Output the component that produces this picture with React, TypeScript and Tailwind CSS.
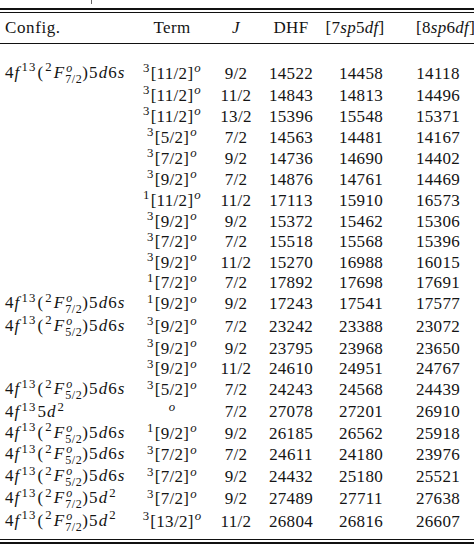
import React from 'react';

// Energy-level table (LaTeX booktabs look). Rows are fixed-height so the
// baselines land where the typeset original puts them.

type Row = {
  c: '' | 'A7' | 'A5' | 'B' | 'C7';
  t: [string, string] | null;
  j: string;
  v: [string, string, string];
  h: number;
};

const rows: Row[] = [
  { c: 'A7', t: ['3', '11/2'], j: '9/2', v: ['14522', '14458', '14118'], h: 23 },
  { c: '', t: ['3', '11/2'], j: '11/2', v: ['14843', '14813', '14496'], h: 21 },
  { c: '', t: ['3', '11/2'], j: '13/2', v: ['15396', '15548', '15371'], h: 21 },
  { c: '', t: ['3', '5/2'], j: '7/2', v: ['14563', '14481', '14167'], h: 21 },
  { c: '', t: ['3', '7/2'], j: '9/2', v: ['14736', '14690', '14402'], h: 21 },
  { c: '', t: ['3', '9/2'], j: '7/2', v: ['14876', '14761', '14469'], h: 21 },
  { c: '', t: ['1', '11/2'], j: '11/2', v: ['17113', '15910', '16573'], h: 21 },
  { c: '', t: ['3', '9/2'], j: '9/2', v: ['15372', '15462', '15306'], h: 21 },
  { c: '', t: ['3', '7/2'], j: '7/2', v: ['15518', '15568', '15396'], h: 20 },
  { c: '', t: ['3', '9/2'], j: '11/2', v: ['15270', '16988', '16015'], h: 21 },
  { c: '', t: ['1', '7/2'], j: '7/2', v: ['17892', '17698', '17691'], h: 20 },
  { c: 'A7', t: ['1', '9/2'], j: '9/2', v: ['17243', '17541', '17577'], h: 22 },
  { c: 'A5', t: ['3', '9/2'], j: '7/2', v: ['23242', '23388', '23072'], h: 23 },
  { c: '', t: ['3', '9/2'], j: '9/2', v: ['23795', '23968', '23650'], h: 21 },
  { c: '', t: ['3', '9/2'], j: '11/2', v: ['24610', '24951', '24767'], h: 20 },
  { c: 'A5', t: ['3', '5/2'], j: '7/2', v: ['24243', '24568', '24439'], h: 22 },
  { c: 'B', t: null, j: '7/2', v: ['27078', '27201', '26910'], h: 22 },
  { c: 'A5', t: ['1', '9/2'], j: '9/2', v: ['26185', '26562', '25918'], h: 21 },
  { c: 'A5', t: ['3', '7/2'], j: '7/2', v: ['24611', '24180', '23976'], h: 22 },
  { c: 'A5', t: ['3', '7/2'], j: '9/2', v: ['24432', '25180', '25521'], h: 22 },
  { c: 'C7', t: ['3', '7/2'], j: '9/2', v: ['27489', '27711', '27638'], h: 22 },
  { c: 'C7', t: ['3', '13/2'], j: '11/2', v: ['26804', '26816', '26607'], h: 23 },
];

// ²F°_{j} with the ° stacked over the subscript
function TermF({ j }: { j: string }) {
  return (
    <>
      <sup className="mx-[1px]">2</sup>
      <span className="italic">F</span>
      <span className="inline-flex flex-col align-[6px] text-[12px] leading-[11px] tracking-[0.6px]">
        <span className="pl-[1px] italic">o</span>
        <span>{j}</span>
      </span>
    </>
  );
}

function Config({ c }: { c: Row['c'] }) {
  if (!c) return null;
  if (c === 'B')
    return (
      <span className="whitespace-nowrap">
        4<span className="italic">f</span>
        <sup className="mx-[1px]">13</sup>5<span className="italic">d</span>
        <sup className="ml-[1px]">2</sup>
      </span>
    );
  const j = c === 'A5' ? '5/2' : '7/2';
  return (
    <span className="whitespace-nowrap">
      4<span className="italic">f</span>
      <sup className="mx-[1px]">13</sup>(
      <TermF j={j} />
      )5<span className="italic">d</span>
      {c === 'C7' ? <sup className="ml-[1px]">2</sup> : <>6<span className="italic">s</span></>}
    </span>
  );
}

function Term({ t }: { t: Row['t'] }) {
  if (!t) return <sup className="italic">o</sup>;
  return (
    <span className="whitespace-nowrap">
      <sup className="mr-[1px]">{t[0]}</sup>[{t[1]}]<sup className="ml-[1px] italic">o</sup>
    </span>
  );
}

export default function App() {
  return (
    <div className="relative h-[544px] w-[474px] overflow-hidden bg-white font-['Liberation_Serif','Times_New_Roman',serif] text-[17px] leading-[20px] tracking-[0.3px] text-[#141414]">
      {/* tail of the caption above, cut off by the crop */}
      <span className="absolute left-[91px] top-0 h-[4px] w-[1px] bg-[#666]" />

      <div className="pt-[8px]">
        <div className="h-[2px] bg-[#111]" />
        <div className="mt-[2px] h-[1px] bg-[#111]" />

        {/* header */}
        <div className="flex h-[30px] items-center">
          <div className="w-[140px] pl-[5px] tracking-[0.6px]">Config.</div>
          <div className="w-[64px] text-center">Term</div>
          <div className="w-[64px] text-center italic">J</div>
          <div className="w-[46px] text-center">DHF</div>
          <div className="w-[94px] pr-[12px] text-center">
            [7<span className="italic">sp</span>5<span className="italic">df</span>]
          </div>
          <div className="w-[60px] pl-[8px] text-center">
            [8<span className="italic">sp</span>6<span className="italic">df</span>]
          </div>
        </div>
        <div className="h-[1px] bg-[#111]" />

        <div className="pt-[18px]">
          {rows.map((r, i) => (
            <div key={i} className="flex items-center" style={{ height: r.h }}>
              <div className="w-[140px] pl-[5px] tracking-[1.1px]">
                <Config c={r.c} />
              </div>
              <div className="w-[64px] text-center">
                <Term t={r.t} />
              </div>
              <div className="w-[64px] text-center">{r.j}</div>
              <div className="w-[46px] text-center">{r.v[0]}</div>
              <div className="w-[94px] text-center">{r.v[1]}</div>
              <div className="w-[60px] text-center">{r.v[2]}</div>
            </div>
          ))}
        </div>

        <div className="mt-[6px] h-[1px] bg-[#111]" />
        <div className="mt-[2px] h-[3px] bg-[#111]" />
      </div>
    </div>
  );
}
